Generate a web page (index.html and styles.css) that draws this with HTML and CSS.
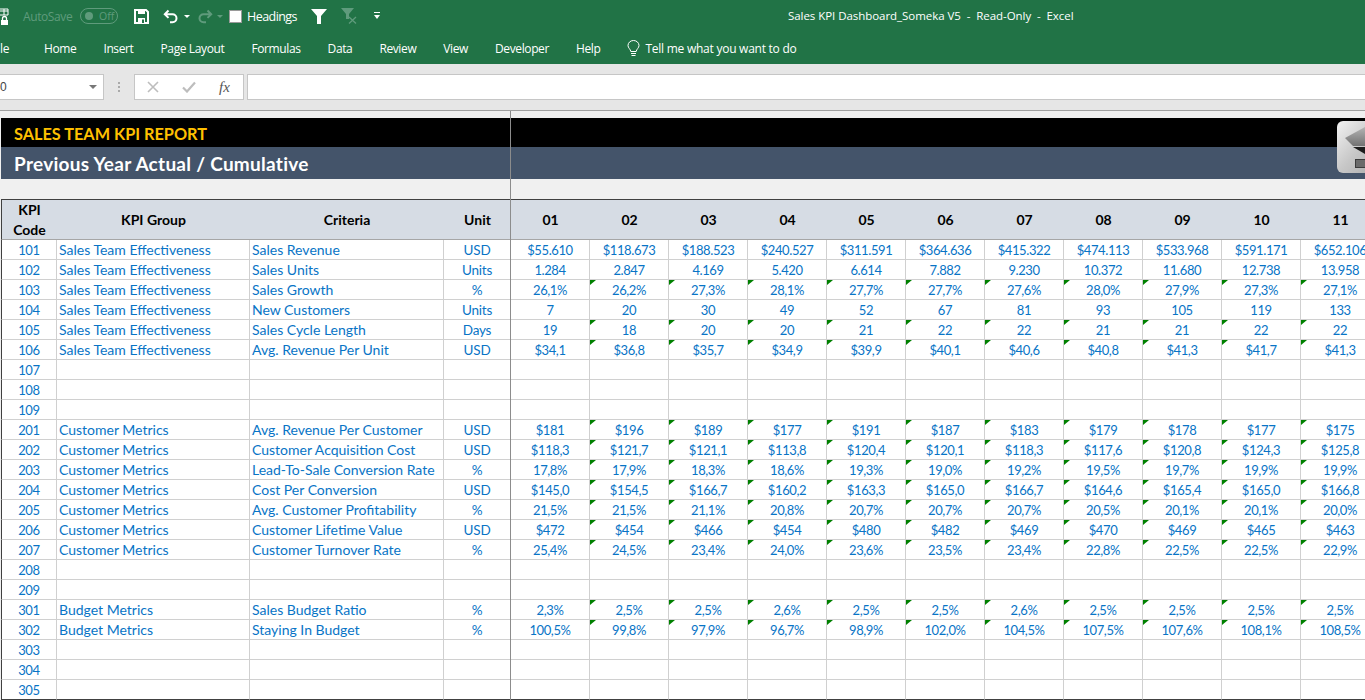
FILE: index.html
```html
<!DOCTYPE html>
<html lang="en">
<head>
<meta charset="utf-8">
<title>Sales KPI Dashboard_Someka V5 - Read-Only - Excel</title>
<link rel="stylesheet" href="styles.css">
</head>
<body>
<header class="ribbon">
  <div class="titlebar">
    <svg class="ic-lock" width="9" height="17" viewBox="0 0 9 17"><path d="M0 1h8v6H0M0 3h8M4 1v6" fill="none" stroke="#fff" stroke-width="1"/><path d="M2.500 12V10.500a2 2 0 0 1 4 0V12" fill="none" stroke="#fff" stroke-width="1.300"/><rect x="1" y="12" width="7" height="5" fill="#fff"/></svg>
    <span class="autosave">AutoSave</span>
    <span class="toggle"><i class="knob"></i><span>Off</span></span>
    <svg class="ic-save" width="15" height="15" viewBox="0 0 15 15"><path d="M1 1h11l2 2v11H1z" fill="none" stroke="#fff" stroke-width="2"/><rect x="4" y="1" width="7" height="4" fill="#fff"/><rect x="4" y="9" width="7" height="5" fill="#fff"/><rect x="8" y="10.500" width="2" height="3.500" fill="#217346"/></svg>
    <svg class="ic-undo" width="16" height="15" viewBox="0 0 16 15"><path d="M5.500 1.500L1.800 5.200l3.700 3.700M2 5.200h7.500a4 4 0 0 1 4 4v0a4 4 0 0 1-4 4H7" fill="none" stroke="#fff" stroke-width="2"/></svg>
    <i class="caret"></i>
    <svg class="ic-redo" width="16" height="15" viewBox="0 0 16 15"><path d="M10.500 1.500l3.700 3.700-3.700 3.700M14 5.200H6.500a4 4 0 0 0-4 4v0a4 4 0 0 0 4 4H9" fill="none" stroke="#5f9b7c" stroke-width="2"/></svg>
    <i class="caret caret-dim"></i>
    <i class="check"></i>
    <span class="qat-label">Headings</span>
    <svg class="ic-funnel" width="16" height="15" viewBox="0 0 16 15"><path d="M0 0h16L10 7v8H6V7z" fill="#fff"/></svg>
    <svg class="ic-clear" width="16" height="16" viewBox="0 0 16 16"><path d="M0 0h13L8 6v5H5V6z" fill="#5f9b7c"/><path d="M8 9l7 6.500M15 9l-7 6.500" stroke="#5f9b7c" stroke-width="1.300"/></svg>
    <svg class="ic-more" width="8" height="8" viewBox="0 0 8 8"><path d="M1 0.500h6" stroke="#fff" stroke-width="1"/><path d="M1 3h6L4 7z" fill="#fff"/></svg>
    <span class="doc-title">Sales KPI Dashboard_Someka V5&nbsp; -&nbsp; Read-Only&nbsp; -&nbsp; Excel</span>
  </div>
  <nav class="tabs">
    <span class="tab tab-file">le</span>
    <span class="tab">Home</span>
    <span class="tab">Insert</span>
    <span class="tab">Page Layout</span>
    <span class="tab">Formulas</span>
    <span class="tab">Data</span>
    <span class="tab">Review</span>
    <span class="tab">View</span>
    <span class="tab">Developer</span>
    <span class="tab">Help</span>
    <span class="tell">
      <svg width="13" height="17" viewBox="0 0 13 17"><path d="M3.800 11.500C3.500 9 1 8 1 5.500a5.500 5 0 0 1 11 0C12 8 9.500 9 9.200 11.500z" fill="none" stroke="#fff" stroke-width="1"/><path d="M4 13.500h5M4.500 15.500h4" stroke="#fff" stroke-width="1"/></svg>
      <span>Tell me what you want to do</span>
    </span>
  </nav>
</header>

<section class="formula">
  <div class="namebox"><span>0</span><i class="caret caret-gray"></i></div>
  <div class="dots"><i></i><i></i><i></i></div>
  <div class="fx-box">
    <svg width="12" height="12" viewBox="0 0 12 12"><path d="M1 1l10 10M11 1L1 11" stroke="#bdbdbd" stroke-width="1.600"/></svg>
    <svg width="14" height="12" viewBox="0 0 14 12"><path d="M1 6.500l4 4L13 1.500" fill="none" stroke="#bdbdbd" stroke-width="2.200"/></svg>
    <span class="fx">fx</span>
  </div>
  <div class="input"></div>
</section>

<main class="sheet">
  <div class="banner-black">SALES TEAM KPI REPORT</div>
  <div class="banner-slate">Previous Year Actual / Cumulative</div>
  <svg class="nav-btn" width="40" height="52" viewBox="0 0 40 52">
    <defs>
      <linearGradient id="btn" x1="0" y1="0" x2="1" y2="1"><stop offset="0" stop-color="#f2f2f2"/><stop offset="0.500" stop-color="#c8c8c8"/><stop offset="1" stop-color="#a8a8a8"/></linearGradient>
      <linearGradient id="arr" x1="0" y1="0" x2="0" y2="1"><stop offset="0" stop-color="#b4b4b4"/><stop offset="1" stop-color="#727272"/></linearGradient>
    </defs>
    <rect x="0" y="0" width="46" height="52" rx="6" fill="url(#btn)"/>
    <path d="M8 17L28 6V25H16z" fill="url(#arr)"/>
    <path d="M16 26H28V33z" fill="#1c1c1c"/>
    <rect x="18.500" y="38.500" width="12" height="8" fill="#6a6a6a" stroke="#3c3c3c"/>
  </svg>
  <table class="kpi">
    <colgroup><col class="c-code"><col class="c-group"><col class="c-crit"><col class="c-unit"><col class="c-m"><col class="c-m"><col class="c-m"><col class="c-m"><col class="c-m"><col class="c-m"><col class="c-m"><col class="c-m"><col class="c-m"><col class="c-m"><col class="c-m"></colgroup>
    <thead><tr><th>KPI<br>Code</th><th>KPI Group</th><th>Criteria</th><th>Unit</th><th>01</th><th>02</th><th>03</th><th>04</th><th>05</th><th>06</th><th>07</th><th>08</th><th>09</th><th>10</th><th>11</th></tr></thead>
    <tbody>
      <tr><td>101</td><td class="l">Sales Team Effectiveness</td><td class="l">Sales Revenue</td><td>USD</td><td>$55.610</td><td>$118.673</td><td>$188.523</td><td>$240.527</td><td>$311.591</td><td>$364.636</td><td>$415.322</td><td>$474.113</td><td>$533.968</td><td>$591.171</td><td>$652.106</td></tr>
      <tr><td>102</td><td class="l">Sales Team Effectiveness</td><td class="l">Sales Units</td><td>Units</td><td>1.284</td><td>2.847</td><td>4.169</td><td>5.420</td><td>6.614</td><td>7.882</td><td>9.230</td><td>10.372</td><td>11.680</td><td>12.738</td><td>13.958</td></tr>
      <tr><td>103</td><td class="l">Sales Team Effectiveness</td><td class="l">Sales Growth</td><td>%</td><td>26,1%</td><td class="f">26,2%</td><td class="f">27,3%</td><td class="f">28,1%</td><td class="f">27,7%</td><td class="f">27,7%</td><td class="f">27,6%</td><td class="f">28,0%</td><td class="f">27,9%</td><td class="f">27,3%</td><td class="f">27,1%</td></tr>
      <tr><td>104</td><td class="l">Sales Team Effectiveness</td><td class="l">New Customers</td><td>Units</td><td>7</td><td>20</td><td>30</td><td>49</td><td>52</td><td>67</td><td>81</td><td>93</td><td>105</td><td>119</td><td>133</td></tr>
      <tr><td>105</td><td class="l">Sales Team Effectiveness</td><td class="l">Sales Cycle Length</td><td>Days</td><td>19</td><td class="f">18</td><td class="f">20</td><td class="f">20</td><td class="f">21</td><td class="f">22</td><td class="f">22</td><td class="f">21</td><td class="f">21</td><td class="f">22</td><td class="f">22</td></tr>
      <tr><td>106</td><td class="l">Sales Team Effectiveness</td><td class="l">Avg. Revenue Per Unit</td><td>USD</td><td>$34,1</td><td class="f">$36,8</td><td class="f">$35,7</td><td class="f">$34,9</td><td class="f">$39,9</td><td class="f">$40,1</td><td class="f">$40,6</td><td class="f">$40,8</td><td class="f">$41,3</td><td class="f">$41,7</td><td class="f">$41,3</td></tr>
      <tr><td>107</td><td></td><td></td><td></td><td></td><td></td><td></td><td></td><td></td><td></td><td></td><td></td><td></td><td></td><td></td></tr>
      <tr><td>108</td><td></td><td></td><td></td><td></td><td></td><td></td><td></td><td></td><td></td><td></td><td></td><td></td><td></td><td></td></tr>
      <tr><td>109</td><td></td><td></td><td></td><td></td><td></td><td></td><td></td><td></td><td></td><td></td><td></td><td></td><td></td><td></td></tr>
      <tr><td>201</td><td class="l">Customer Metrics</td><td class="l">Avg. Revenue Per Customer</td><td>USD</td><td>$181</td><td class="f">$196</td><td class="f">$189</td><td class="f">$177</td><td class="f">$191</td><td class="f">$187</td><td class="f">$183</td><td class="f">$179</td><td class="f">$178</td><td class="f">$177</td><td class="f">$175</td></tr>
      <tr><td>202</td><td class="l">Customer Metrics</td><td class="l">Customer Acquisition Cost</td><td>USD</td><td>$118,3</td><td class="f">$121,7</td><td class="f">$121,1</td><td class="f">$113,8</td><td class="f">$120,4</td><td class="f">$120,1</td><td class="f">$118,3</td><td class="f">$117,6</td><td class="f">$120,8</td><td class="f">$124,3</td><td class="f">$125,8</td></tr>
      <tr><td>203</td><td class="l">Customer Metrics</td><td class="l">Lead-To-Sale Conversion Rate</td><td>%</td><td>17,8%</td><td class="f">17,9%</td><td class="f">18,3%</td><td class="f">18,6%</td><td class="f">19,3%</td><td class="f">19,0%</td><td class="f">19,2%</td><td class="f">19,5%</td><td class="f">19,7%</td><td class="f">19,9%</td><td class="f">19,9%</td></tr>
      <tr><td>204</td><td class="l">Customer Metrics</td><td class="l">Cost Per Conversion</td><td>USD</td><td>$145,0</td><td class="f">$154,5</td><td class="f">$166,7</td><td class="f">$160,2</td><td class="f">$163,3</td><td class="f">$165,0</td><td class="f">$166,7</td><td class="f">$164,6</td><td class="f">$165,4</td><td class="f">$165,0</td><td class="f">$166,8</td></tr>
      <tr><td>205</td><td class="l">Customer Metrics</td><td class="l">Avg. Customer Profitability</td><td>%</td><td>21,5%</td><td class="f">21,5%</td><td class="f">21,1%</td><td class="f">20,8%</td><td class="f">20,7%</td><td class="f">20,7%</td><td class="f">20,7%</td><td class="f">20,5%</td><td class="f">20,1%</td><td class="f">20,1%</td><td class="f">20,0%</td></tr>
      <tr><td>206</td><td class="l">Customer Metrics</td><td class="l">Customer Lifetime Value</td><td>USD</td><td>$472</td><td class="f">$454</td><td class="f">$466</td><td class="f">$454</td><td class="f">$480</td><td class="f">$482</td><td class="f">$469</td><td class="f">$470</td><td class="f">$469</td><td class="f">$465</td><td class="f">$463</td></tr>
      <tr><td>207</td><td class="l">Customer Metrics</td><td class="l">Customer Turnover Rate</td><td>%</td><td>25,4%</td><td class="f">24,5%</td><td class="f">23,4%</td><td class="f">24,0%</td><td class="f">23,6%</td><td class="f">23,5%</td><td class="f">23,4%</td><td class="f">22,8%</td><td class="f">22,5%</td><td class="f">22,5%</td><td class="f">22,9%</td></tr>
      <tr><td>208</td><td></td><td></td><td></td><td></td><td></td><td></td><td></td><td></td><td></td><td></td><td></td><td></td><td></td><td></td></tr>
      <tr><td>209</td><td></td><td></td><td></td><td></td><td></td><td></td><td></td><td></td><td></td><td></td><td></td><td></td><td></td><td></td></tr>
      <tr><td>301</td><td class="l">Budget Metrics</td><td class="l">Sales Budget Ratio</td><td>%</td><td>2,3%</td><td class="f">2,5%</td><td class="f">2,5%</td><td class="f">2,6%</td><td class="f">2,5%</td><td class="f">2,5%</td><td class="f">2,6%</td><td class="f">2,5%</td><td class="f">2,5%</td><td class="f">2,5%</td><td class="f">2,5%</td></tr>
      <tr><td>302</td><td class="l">Budget Metrics</td><td class="l">Staying In Budget</td><td>%</td><td>100,5%</td><td class="f">99,8%</td><td class="f">97,9%</td><td class="f">96,7%</td><td class="f">98,9%</td><td class="f">102,0%</td><td class="f">104,5%</td><td class="f">107,5%</td><td class="f">107,6%</td><td class="f">108,1%</td><td class="f">108,5%</td></tr>
      <tr><td>303</td><td></td><td></td><td></td><td></td><td></td><td></td><td></td><td></td><td></td><td></td><td></td><td></td><td></td><td></td></tr>
      <tr><td>304</td><td></td><td></td><td></td><td></td><td></td><td></td><td></td><td></td><td></td><td></td><td></td><td></td><td></td><td></td></tr>
      <tr><td>305</td><td></td><td></td><td></td><td></td><td></td><td></td><td></td><td></td><td></td><td></td><td></td><td></td><td></td><td></td></tr>
    </tbody>
  </table>
  <i class="freeze"></i>
</main>
</body>
</html>
```
FILE: styles.css
```css
* { box-sizing: border-box; }
html, body { margin: 0; height: 700px; overflow: hidden; }
body { display: flex; flex-direction: column; font-family: "Lato", "Liberation Sans", sans-serif; background: #e6e6e6; }
i { display: block; font-style: normal; }

.ribbon { height: 64px; background: #217346; color: #fff; font-family: "Open Sans", "Noto Sans", sans-serif; flex: none; }
.titlebar { height: 32px; display: flex; align-items: center; font-size: 12px; }
.ic-lock { margin-top: 1px; flex: none; }
.autosave { margin-left: 14px; width: 50px; color: #5f9b7c; letter-spacing: -0.4px; white-space: nowrap; }
.toggle { margin-left: 7px; width: 38px; height: 16px; border: 1px solid #5f9b7c; border-radius: 8px; display: flex; align-items: center; gap: 6px; padding-left: 4px; color: #5f9b7c; font-size: 10.5px; }
.knob { width: 8px; height: 8px; border-radius: 50%; background: #5f9b7c; }
.ic-save { margin-left: 16px; flex: none; }
.ic-undo { margin-left: 14px; flex: none; }
.caret { width: 0; height: 0; margin-left: 5px; border: 3px solid transparent; border-top: 3px solid #fff; border-bottom: 0; flex: none; }
.caret-dim { border-top-color: #5f9b7c; margin-left: 4px; }
.ic-redo { margin-left: 7px; flex: none; }
.check { width: 13px; height: 13px; margin-left: 6px; background: #fff; border: 1px solid #9a9a9a; flex: none; }
.qat-label { margin-left: 5px; width: 50px; white-space: nowrap; font-size: 12.5px; letter-spacing: -0.55px; }
.ic-funnel { margin-left: 14px; flex: none; }
.ic-clear { margin-left: 14px; flex: none; }
.ic-more { margin-left: 16px; flex: none; }
.doc-title { margin-left: 407px; margin-bottom: 2px; white-space: nowrap; font-size: 11.5px; letter-spacing: -0.05px; }

.tabs { height: 32px; display: flex; align-items: center; gap: 27px; font-size: 12px; }
.tab { white-space: nowrap; letter-spacing: -0.38px; }
.tab-file { margin-right: 8px; }
.tell { display: flex; align-items: center; gap: 5px; white-space: nowrap; letter-spacing: -0.25px; }

.formula { height: 46px; flex: none; display: flex; align-items: flex-start; padding-top: 10px; background: #e6e6e6; font-family: "Liberation Sans", sans-serif; font-size: 12px; color: #444; }
.namebox { width: 104px; height: 26px; background: #fff; border: 1px solid #c6c6c6; border-left: 0; display: flex; align-items: center; justify-content: space-between; padding-right: 6px; }
.caret-gray { border-width: 4px; border-top-color: #777; border-bottom: 0; }
.dots { width: 30px; height: 26px; display: flex; flex-direction: column; align-items: center; justify-content: center; gap: 2px; }
.dots i { width: 2px; height: 2px; background: #aaa; }
.fx-box { width: 110px; height: 26px; background: #fff; border: 1px solid #c6c6c6; display: flex; align-items: center; padding-left: 12px; }
.fx-box svg + svg { margin-left: 23px; }
.fx { margin-left: 23px; font-family: "Liberation Serif", serif; font-style: italic; font-size: 15px; color: #555; }
.input { flex: 1; height: 26px; margin-left: 3px; background: #fff; border: 1px solid #c6c6c6; border-right: 0; }

.sheet { position: relative; flex: 1; overflow: hidden; background: #f0f0f0; border-top: 1px solid #a0a0a0; padding: 7px 0 0 1px; min-height: 0; }
.banner-black { height: 29px; background: #000; color: #ffc000; font-weight: 700; font-size: 16.3px; line-height: 32px; padding-left: 13px; white-space: nowrap; }
.banner-slate { height: 32px; background: #44546a; color: #fff; font-weight: 700; font-size: 19px; letter-spacing: 0.27px; line-height: 34px; padding-left: 13px; white-space: nowrap; }
.nav-btn { position: absolute; top: 10px; right: -12px; }
.freeze { position: absolute; top: 0; bottom: 0; left: 510px; width: 1px; background: #8c8c8c; }

.kpi { margin-top: 20px; table-layout: fixed; width: 1379px; border-collapse: separate; border-spacing: 0; background: #fff; color: #0874c6; font-size: 14px; }
.c-code { width: 56px; }
.c-group { width: 193px; }
.c-crit { width: 194px; }
.c-unit { width: 67px; }
.c-m { width: 79px; }
.kpi th { height: 41px; padding: 0; background: #d6dce4; color: #000; font-weight: 700; font-size: 14px; line-height: 19.5px; border-top: 1px solid #404040; border-bottom: 1px solid #a6a6a6; text-align: center; }
.kpi th:first-child { border-left: 1px solid #404040; }
.kpi td { position: relative; height: 20px; padding: 0; line-height: 19px; text-align: center; white-space: nowrap; border-right: 1px solid #d0d0d0; border-bottom: 1px solid #d0d0d0; }
.kpi td:first-child { border-left: 1px solid #404040; padding-top: 1px; line-height: 18px; font-size: 13px; letter-spacing: -0.3px; }
.kpi td:nth-child(4) { padding-top: 1px; line-height: 18px; font-size: 13.5px; letter-spacing: -0.2px; }
.kpi td:nth-child(n+5) { padding-top: 1px; line-height: 18px; font-size: 13px; letter-spacing: -0.4px; }
.kpi td.l { text-align: left; padding-left: 2px; }
.kpi td.f::before { content: ""; position: absolute; top: 0; left: 0; border-top: 5px solid #008000; border-right: 6px solid transparent; }
.kpi tbody tr:last-child td { border-bottom-color: #404040; }
```
